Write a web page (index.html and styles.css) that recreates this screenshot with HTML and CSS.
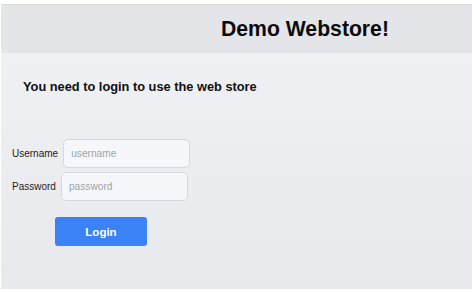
FILE: index.html
```html
<!DOCTYPE html>
<html>
<head>
    <title>Demo Webstore</title>
    <link rel="stylesheet" href="styles.css">
</head>
<body>
    <div class="app">
        <div class="header">
            <h1>Demo Webstore!</h1>
        </div>

        <div class="content">
            <h2>You need to login to use the web store</h2>

            <form class="login-form" onsubmit="return false;">
                <div class="form-row">
                    <label for="username">Username</label>
                    <input type="text" id="username" placeholder="username">
                </div>
                <div class="form-row">
                    <label for="password">Password</label>
                    <input type="password" id="password" placeholder="password">
                </div>
                <button type="submit" class="login-btn">Login</button>
            </form>
        </div>
    </div>
</body>
</html>
```

FILE: styles.css
```css
html, body { height: 100%; }
body { margin: 0; background: #fff; font-family: "Liberation Sans", Arial, sans-serif; color: #111; }

.app {
    box-sizing: border-box;
    height: calc(100% - 7px);
    margin: 4px 2px 3px 1px;
    border-top: 1px solid #d8d9dc;
    background: linear-gradient(#f1f2f6, #e8e9ed);
}

.header { height: 48px; background: #e4e5e9; padding-left: 220px; }
.header h1 { margin: 0; font-size: 21.2px; line-height: 48px; font-weight: bold; color: #0b0b0b; }

.content { padding: 26px 0 0 0; }
.content h2 { margin: 0 0 45px 22px; font-size: 12.8px; line-height: 15px; font-weight: bold; color: #111; }

.login-form { padding-left: 11px; }
.form-row { display: flex; align-items: center; gap: 5px; margin-bottom: 4px; }
.form-row label { font-size: 10px; color: #222; }
.form-row input {
    box-sizing: border-box;
    width: 127px;
    height: 29px;
    padding: 0 7px;
    border: 1px solid #d5d8de;
    border-radius: 5px;
    background: #f6f7fa;
    font-family: inherit;
    font-size: 10.2px;
    color: #333;
}
.form-row input::placeholder { color: #9ea3ab; }

.login-btn {
    display: block;
    margin: 16px 0 0 43px;
    width: 92px;
    height: 29px;
    border: none;
    border-radius: 3px;
    background: #3b82f6;
    color: #fff;
    font-family: inherit;
    font-size: 11.5px;
    font-weight: bold;
    cursor: pointer;
}
```
